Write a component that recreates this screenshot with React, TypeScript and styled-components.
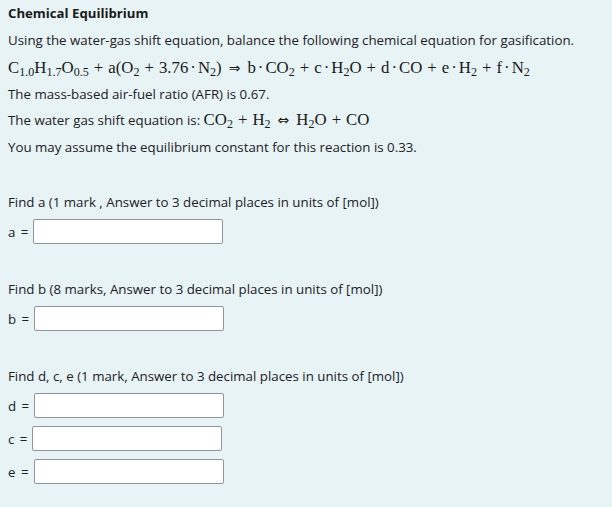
import React from 'react';
import styled, { createGlobalStyle } from 'styled-components';

const GlobalStyle = createGlobalStyle`
  html, body {
    margin: 0;
    padding: 0;
    background: #e7f3f5;
  }
  body {
    font-family: "Open Sans", "Noto Sans", sans-serif;
    font-size: 13.3px;
    color: #1d2125;
  }
`;

const Page = styled.div`
  width: 612px;
  height: 507px;
  box-sizing: border-box;
  padding: 3px 8px 0 8px;
  background: #e7f3f5;
`;

const Title = styled.div`
  font-weight: 700;
  font-size: 13.2px;
  line-height: 20px;
  color: #1a1a1a;
`;

const Line = styled.div<{ $top?: number }>`
  margin-top: ${p => p.$top ?? 8}px;
  height: 20px;
  line-height: 20px;
  white-space: nowrap;
`;

const Math = styled.span`
  font-family: "Liberation Serif", "DejaVu Serif", serif;
  font-size: 16.8px;
  color: #1a1a1a;
`;

const Sub = styled.sub`
  font-size: 72%;
  vertical-align: -0.28em;
  line-height: 0;
`;

const Op = styled.span`
  margin: 0 5px;
`;

const Arrow = styled.span`
  margin: 0 7px;
  font-family: "DejaVu Sans", sans-serif;
  font-size: 14px;
`;

const Dot = styled.span`
  margin: 0 2px;
`;

const Prompt = styled.div<{ $top: number }>`
  margin-top: ${p => p.$top}px;
  line-height: 20px;
`;

const Field = styled.div<{ $top: number }>`
  margin-top: ${p => p.$top}px;
  display: flex;
  align-items: center;
  gap: 5px;
`;

const Label = styled.span`
  line-height: 20px;
  word-spacing: 2px;
`;

const Box = styled.input`
  width: 190px;
  height: 25px;
  box-sizing: border-box;
  border: 1px solid #8f959e;
  border-radius: 2px;
  background: #fff;
  padding: 0 6px;
  margin: 0;
  outline: none;
`;

const M = ({ children }: { children: React.ReactNode }) => <Math>{children}</Math>;

export default function App() {
  return (
    <Page>
      <GlobalStyle />
      <Title>Chemical Equilibrium</Title>
      <Line $top={7}>Using the water-gas shift equation, balance the following chemical equation for gasification.</Line>
      <Line $top={8}>
        <M>
          C<Sub>1.0</Sub>H<Sub>1.7</Sub>O<Sub>0.5</Sub>
          <Op>+</Op>a(O<Sub>2</Sub><Op>+</Op>3.76<Dot>·</Dot>N<Sub>2</Sub>)
          <Arrow>⇒</Arrow>b<Dot>·</Dot>CO<Sub>2</Sub>
          <Op>+</Op>c<Dot>·</Dot>H<Sub>2</Sub>O
          <Op>+</Op>d<Dot>·</Dot>CO
          <Op>+</Op>e<Dot>·</Dot>H<Sub>2</Sub>
          <Op>+</Op>f<Dot>·</Dot>N<Sub>2</Sub>
        </M>
      </Line>
      <Line $top={6}>The mass-based air-fuel ratio (AFR) is 0.67.</Line>
      <Line $top={6}>
        The water gas shift equation is:{' '}
        <M>
          CO<Sub>2</Sub><Op>+</Op>H<Sub>2</Sub><Arrow>⇔</Arrow>H<Sub>2</Sub>O<Op>+</Op>CO
        </M>
      </Line>
      <Line $top={7}>You may assume the equilibrium constant for this reaction is 0.33.</Line>

      <Prompt $top={35}>Find a (1 mark , Answer to 3 decimal places in units of [mol])</Prompt>
      <Field $top={7}><Label>a =</Label><Box /></Field>

      <Prompt $top={35}>Find b (8 marks, Answer to 3 decimal places in units of [mol])</Prompt>
      <Field $top={7}><Label>b =</Label><Box /></Field>

      <Prompt $top={35}>Find d, c, e (1 mark, Answer to 3 decimal places in units of [mol])</Prompt>
      <Field $top={7}><Label>d =</Label><Box /></Field>
      <Field $top={8}><Label>c =</Label><Box /></Field>
      <Field $top={8}><Label>e =</Label><Box /></Field>
    </Page>
  );
}
